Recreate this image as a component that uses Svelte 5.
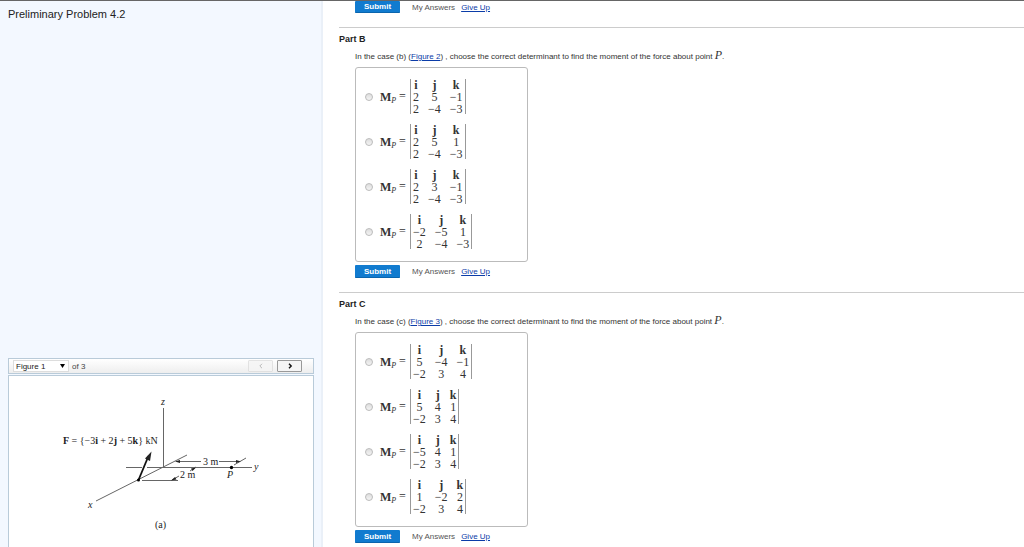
<script lang="ts">
	interface Part {
		id: string;
		title: string;
		caseName: string;
		figure: number;
		options: string[][][];
	}

	const head = ['i', 'j', 'k'];

	const parts: Part[] = [
		{
			id: 'b',
			title: 'Part B',
			caseName: '(b)',
			figure: 2,
			options: [
				[['2', '5', '−1'], ['2', '−4', '−3']],
				[['2', '5', '1'], ['2', '−4', '−3']],
				[['2', '3', '−1'], ['2', '−4', '−3']],
				[['−2', '−5', '1'], ['2', '−4', '−3']]
			]
		},
		{
			id: 'c',
			title: 'Part C',
			caseName: '(c)',
			figure: 3,
			options: [
				[['5', '−4', '−1'], ['−2', '3', '4']],
				[['5', '4', '1'], ['−2', '3', '4']],
				[['−5', '4', '1'], ['−2', '3', '4']],
				[['1', '−2', '2'], ['−2', '3', '4']]
			]
		}
	];

	let answers = $state<Record<string, number | null>>({ b: null, c: null });
	let figure = $state(1);
</script>

{#snippet actions()}
	<div class="actions">
		<button class="submit" type="button">Submit</button>
		<span class="my-answers">My Answers</span>
		<a class="give-up" href="#give-up">Give Up</a>
	</div>
{/snippet}

<div class="page">
	<aside class="sidebar">
		<h1>Preliminary Problem 4.2</h1>

		<section class="figure">
			<div class="toolbar">
				<label>
					<span class="select-wrap">
						<select bind:value={figure} aria-label="Figure">
							<option value={1}>Figure 1</option>
							<option value={2}>Figure 2</option>
							<option value={3}>Figure 3</option>
						</select>
						<svg class="caret" viewBox="0 0 6 6"><path d="M0 0.5h6L3 5.5z" /></svg>
					</span>
					of 3
				</label>
				<div class="pager">
					<button type="button" aria-label="Previous figure" disabled={figure === 1} onclick={() => figure--}>
						<svg viewBox="0 0 6 6"><path d="M4 0.8L1.8 3L4 5.2" /></svg>
					</button>
					<button type="button" aria-label="Next figure" disabled={figure === 3} onclick={() => figure++}>
						<svg viewBox="0 0 6 6"><path d="M2 0.8L4.2 3L2 5.2" /></svg>
					</button>
				</div>
			</div>

			<div class="canvas">
				<svg class="diagram" viewBox="0 0 304 171">
					<!-- axes -->
					<g class="axis">
						<path d="M154.5 32V91" />
						<path d="M117 91.5H133M138 91.5H243" />
						<path d="M178 79L87 125" />
					</g>
					<!-- dimensions -->
					<g class="dim">
						<path d="M168 85.5H192M210 85.5H230" />
						<path d="M225 89L237 82" />
						<path d="M133 104.5H169" />
						<path d="M163 104L170 100M181 95L187 91" />
					</g>
					<path class="solid" d="M166 85.5l5-1.5v3zM232 85.5l-5-1.5v3zM162 104.5l4-3.5 1.5 2.5zM187 91.5l-5 1 1.5 2.5z" />
					<!-- force vector -->
					<path class="force" d="M129.5 104L139.5 80" />
					<path class="solid" d="M142.5 75.5l-6.5 7 5 2.5z" />
					<circle cx="129.5" cy="104" r="1.5" />
					<circle cx="222.5" cy="91.5" r="1.7" />

					<text x="54" y="68" class="label"><tspan class="bold">F</tspan> = {'{'}−3<tspan class="bold">i</tspan> + 2<tspan class="bold">j</tspan> + 5<tspan class="bold">k</tspan>{'}'} kN</text>
					<text x="152" y="29" class="label italic">z</text>
					<text x="245" y="94" class="label italic">y</text>
					<text x="79" y="132" class="label italic">x</text>
					<text x="218" y="102" class="label italic">P</text>
					<text x="194" y="89" class="label">3 m</text>
					<text x="171" y="102" class="label">2 m</text>
					<text x="146" y="152" class="label">(a)</text>
				</svg>
			</div>
		</section>
	</aside>

	<main>
		{@render actions()}

		{#each parts as part (part.id)}
			<section class="part">
				<h2>{part.title}</h2>
				<div class="body">
					<p id="question-{part.id}">
						In the case {part.caseName} (<a href="#figure-{part.figure}">Figure {part.figure}</a>) , choose the correct determinant to find the moment of the force about point <i>P</i>.
					</p>
					<div class="options" role="radiogroup" aria-labelledby="question-{part.id}">
						{#each part.options as rows, index}
							<label class="option">
								<input type="radio" name="part-{part.id}" value={index} bind:group={answers[part.id]} />
								<span class="lhs"><b>M</b><sub>P</sub></span>
								<span class="eq">=</span>
								<span class="det">
									{#each head as unit}
										<b>{unit}</b>
									{/each}
									{#each rows.flat() as cell}
										<span>{cell}</span>
									{/each}
								</span>
							</label>
						{/each}
					</div>
				</div>
				{@render actions()}
			</section>
		{/each}
	</main>
</div>

<style>
	:global(body) {
		margin: 0;
		background: #fff;
	}
	.page {
		display: grid;
		grid-template-columns: 323px minmax(0, 1fr);
		box-sizing: border-box;
		height: 100vh;
		overflow: hidden;
		border-top: 1px solid #666;
		font-family: "Liberation Sans", Arial, sans-serif;
		font-size: 8px;
		color: #333;
	}
	h1, h2, p {
		margin: 0;
	}
	a {
		color: #0b3ca8;
		text-decoration: underline;
	}

	.sidebar {
		display: flex;
		flex-direction: column;
		justify-content: space-between;
		padding: 0 7px 0 8px;
		background: #f3f8ff;
		border-right: 2px solid #eaf0f8;
	}
	h1 {
		padding-top: 7px;
		font-size: 11px;
		line-height: 13px;
		font-weight: normal;
		color: #222;
	}

	.toolbar {
		display: flex;
		align-items: center;
		justify-content: space-between;
		box-sizing: border-box;
		height: 16px;
		padding: 0 11px 0 4px;
		margin-bottom: 1px;
		border: 1px solid #b9cbd9;
		background: linear-gradient(#fff, #eee);
		color: #444;
	}
	.toolbar label {
		display: flex;
		align-items: center;
		gap: 3px;
	}
	.select-wrap {
		display: flex;
		position: relative;
	}
	select {
		appearance: none;
		width: 56px;
		height: 12px;
		padding: 0 0 0 2px;
		border: 1px solid #ddd;
		border-radius: 0;
		background: #fff;
		font: inherit;
		color: #222;
	}
	.caret {
		position: absolute;
		right: 4px;
		top: 3px;
		width: 5px;
		height: 6px;
		pointer-events: none;
	}
	.pager {
		display: flex;
		gap: 4px;
	}
	.pager button {
		display: flex;
		align-items: center;
		justify-content: center;
		width: 25px;
		height: 12px;
		padding: 0;
		border: 1px solid #999;
		border-radius: 1px;
		background: #f5f5f5;
	}
	.pager button:disabled {
		border-color: #ddd;
		opacity: 0.8;
	}
	.pager svg {
		width: 6px;
		height: 6px;
		fill: none;
		stroke: #111;
		stroke-width: 1.4;
	}
	.pager button:disabled svg {
		stroke: #aaa;
		stroke-width: 1;
	}

	.canvas {
		border: 1px solid #b9cbd9;
		border-bottom: none;
		background: #fff;
	}
	.diagram {
		display: block;
		width: 100%;
		font-family: "Liberation Serif", "Times New Roman", serif;
	}
	.axis, .dim {
		fill: none;
		stroke: #666;
		stroke-width: 1;
	}
	.force {
		fill: none;
		stroke: #111;
		stroke-width: 1.8;
	}
	.solid {
		fill: #222;
	}
	.label {
		font-size: 10px;
		fill: #222;
	}
	.bold {
		font-weight: bold;
	}
	.italic {
		font-style: italic;
	}

	main {
		padding-left: 16px;
	}
	.actions {
		display: flex;
		align-items: center;
		height: 13px;
		padding-left: 16px;
		color: #555;
	}
	main > .actions {
		height: 12px;
	}
	.submit {
		width: 45px;
		height: 100%;
		padding: 0;
		border: none;
		border-bottom: 1px solid #0b65ad;
		border-radius: 1px;
		background: #117bcf;
		font: bold 8px "Liberation Sans", Arial, sans-serif;
		color: #fff;
	}
	.my-answers {
		margin: 0 6px 0 12px;
	}

	.part {
		margin-top: 14px;
		border-top: 1px solid #ccc;
		padding-top: 5px;
	}
	h2 {
		font-size: 9px;
		line-height: 12px;
		color: #222;
	}
	.body {
		padding-left: 16px;
	}
	p {
		padding: 6px 0 4px;
		line-height: 12px;
		white-space: nowrap;
	}
	p i {
		font-family: "Liberation Serif", "Times New Roman", serif;
		font-size: 12px;
		line-height: 8px;
	}
	.options {
		display: flex;
		flex-direction: column;
		gap: 10px;
		box-sizing: border-box;
		width: 173px;
		padding: 11px 9px 12px;
		margin-bottom: 3px;
		border: 1px solid #bbb;
		border-radius: 3px;
	}
	.option {
		display: flex;
		align-items: center;
		height: 35px;
		font-family: "Liberation Serif", "Times New Roman", serif;
		font-size: 12px;
	}
	input {
		appearance: none;
		width: 8px;
		height: 8px;
		margin: 0;
		border: 1px solid #bbb;
		border-radius: 50%;
		background: linear-gradient(#ddd, #f4f4f4);
	}
	input:checked {
		background: radial-gradient(#333 35%, #eee 45%);
	}
	.lhs {
		width: 17px;
		margin-left: 7px;
		line-height: 12px;
		white-space: nowrap;
	}
	sub {
		font-size: 8px;
		font-style: italic;
		line-height: 1px;
		vertical-align: -2px;
	}
	.eq {
		width: 13px;
		padding-left: 2px;
		box-sizing: border-box;
	}
	.det {
		display: grid;
		grid-template-columns: repeat(3, auto);
		grid-auto-rows: 12px;
		column-gap: 9px;
		align-content: center;
		height: 35px;
		padding: 0 2px;
		border: solid #999;
		border-width: 0 1px;
		line-height: 12px;
		text-align: center;
	}
</style>
